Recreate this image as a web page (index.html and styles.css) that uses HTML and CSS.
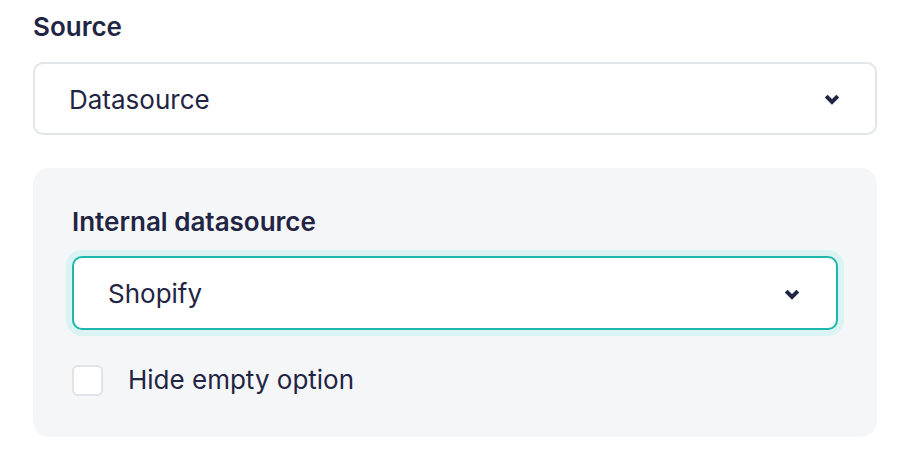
FILE: index.html
```html
<!DOCTYPE html>
<html lang="en">
<head>
<meta charset="utf-8">
<title>Source</title>
<link rel="stylesheet" href="styles.css">
</head>
<body>
<div class="form">
  <div class="label">Source</div>
  <div class="select">
    <span class="value">Datasource</span>
    <svg class="chevron" width="16" height="11" viewBox="0 0 16 11"><polyline points="2.2,2.2 8,8 13.8,2.2" fill="none" stroke="#1f2543" stroke-width="4" stroke-linejoin="miter"/></svg>
  </div>
  <div class="panel">
    <div class="label">Internal datasource</div>
    <div class="select focused">
      <span class="value">Shopify</span>
      <svg class="chevron" width="16" height="11" viewBox="0 0 16 11"><polyline points="2.2,2.2 8,8 13.8,2.2" fill="none" stroke="#1f2543" stroke-width="4" stroke-linejoin="miter"/></svg>
    </div>
    <label class="check">
      <span class="box"></span>
      <span class="check-text">Hide empty option</span>
    </label>
  </div>
</div>
</body>
</html>
```
FILE: styles.css
```css
html, body {
  margin: 0;
  padding: 0;
  background: #ffffff;
}
body {
  font-family: "Inter", "Liberation Sans", sans-serif;
  color: #1f2543;
  padding: 11px 0 0 33px;
}
.form {
  width: 844px;
}
.label {
  font-size: 26px;
  font-weight: 600;
  line-height: 32px;
  margin-bottom: 19px;
}
.select {
  box-sizing: border-box;
  height: 73px;
  border: 2px solid #e2e5ea;
  border-radius: 10px;
  background: #fff;
  display: flex;
  align-items: center;
  justify-content: space-between;
  padding: 2px 35px 0 34px;
  font-size: 26px;
}
.value {
  line-height: 32px;
}
.chevron {
  display: block;
}
.panel {
  margin-top: 33px;
  background: #f5f6f8;
  border-radius: 16px;
  padding: 38px 39px 41px 39px;
}
.panel .label {
  margin-bottom: 18px;
}
.select.focused {
  height: 74px;
  border-color: #1fb6ab;
  box-shadow: 0 0 0 6px #d9f4f2;
  padding-right: 36px;
}
.check {
  display: flex;
  align-items: center;
  gap: 25px;
  margin-top: 34px;
  font-size: 26px;
}
.box {
  box-sizing: border-box;
  width: 31px;
  height: 31px;
  border: 2px solid #e1e3e8;
  border-radius: 6px;
  background: #fff;
}
.check-text {
  line-height: 32px;
}
```
